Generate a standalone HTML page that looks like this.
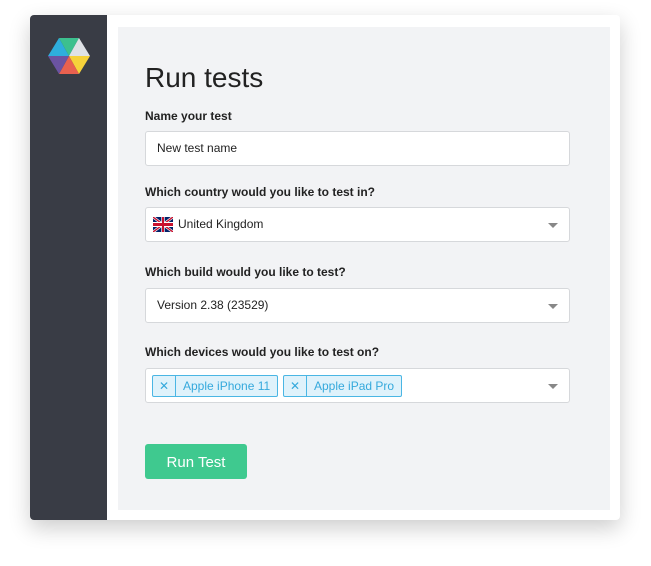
<!DOCTYPE html>
<html><head><style>
body{margin:0;width:651px;height:566px;background:#fff;font-family:"Liberation Sans",sans-serif;position:relative;overflow:hidden}
.card{position:absolute;left:30px;top:15px;width:590px;height:505px;background:#fff;border-radius:4px;box-shadow:0 8px 22px rgba(0,0,0,.2);overflow:hidden}
.side{position:absolute;left:0;top:0;width:77px;height:505px;background:#393c45}
.panel{position:absolute;left:88px;top:12px;width:492px;height:483px;background:#f2f3f5}
h1{position:absolute;left:115px;top:47px;margin:0;font-size:28px;font-weight:normal;color:#222}
.lab{position:absolute;left:115px;font-size:12px;font-weight:bold;color:#222}
.inp{position:absolute;left:115px;width:423px;height:33px;background:#fff;border:1px solid #d6d8db;border-radius:3px;font-size:12px;color:#222;line-height:33px}
.inp span.t{position:absolute;left:11px}
.car{position:absolute;right:11px;top:15px;border-left:5px solid transparent;border-right:5px solid transparent;border-top:5px solid #888}
.tag{position:absolute;top:6px;height:20px;border:1px solid #4ab6e4;background:#dff2fb;border-radius:2px;color:#35a9dc;font-size:12px;line-height:20px}
.tag .x{display:inline-block;width:22px;text-align:center;border-right:1px solid #4ab6e4}
.tag .n{padding:0 7px}
.btn{position:absolute;left:115px;top:429px;width:102px;height:35px;background:#3fc98f;border-radius:3px;color:#fff;font-size:15px;text-align:center;line-height:38px}
</style></head><body>
<div class="card">
<div class="side">
<svg style="position:absolute;left:18px;top:21px" width="42" height="40" viewBox="0 0 42 40">
<g transform="translate(21,20)">
<polygon points="0,0 -10,-18 10,-18" fill="#3cc08e"/>
<polygon points="0,0 10,-18 21,0" fill="#dfe2e6"/>
<polygon points="0,0 21,0 10,18" fill="#f6d23a"/>
<polygon points="0,0 10,18 -10,18" fill="#e9614f"/>
<polygon points="0,0 -10,18 -21,0" fill="#6b53a2"/>
<polygon points="0,0 -21,0 -10,-18" fill="#2eaedd"/>
</g></svg>
</div>
<div class="panel"></div>
<h1>Run tests</h1>
<div class="lab" style="top:94px">Name your test</div>
<div class="inp" style="top:116px"><span class="t">New test name</span></div>
<div class="lab" style="top:170px">Which country would you like to test in?</div>
<div class="inp" style="top:192px">
<svg style="position:absolute;left:7px;top:9px" width="20" height="15" viewBox="0 0 60 30" preserveAspectRatio="none"><clipPath id="c"><rect width="60" height="30"/></clipPath><g clip-path="url(#c)"><rect width="60" height="30" fill="#012169"/><path d="M0,0 60,30M60,0 0,30" stroke="#fff" stroke-width="6"/><path d="M0,0 60,30M60,0 0,30" stroke="#C8102E" stroke-width="3"/><path d="M30,0v30M0,15h60" stroke="#fff" stroke-width="10"/><path d="M30,0v30M0,15h60" stroke="#C8102E" stroke-width="6"/></g></svg>
<span class="t" style="left:32px">United Kingdom</span><div class="car"></div></div>
<div class="lab" style="top:250px">Which build would you like to test?</div>
<div class="inp" style="top:273px"><span class="t">Version 2.38 (23529)</span><div class="car"></div></div>
<div class="lab" style="top:330px">Which devices would you like to test on?</div>
<div class="inp" style="top:353px">
<div class="tag" style="left:6px"><span class="x">✕</span><span class="n">Apple iPhone 11</span></div>
<div class="tag" style="left:137px"><span class="x">✕</span><span class="n">Apple iPad Pro</span></div>
<div class="car"></div></div>
<div class="btn">Run Test</div>
</div>
</body></html>
